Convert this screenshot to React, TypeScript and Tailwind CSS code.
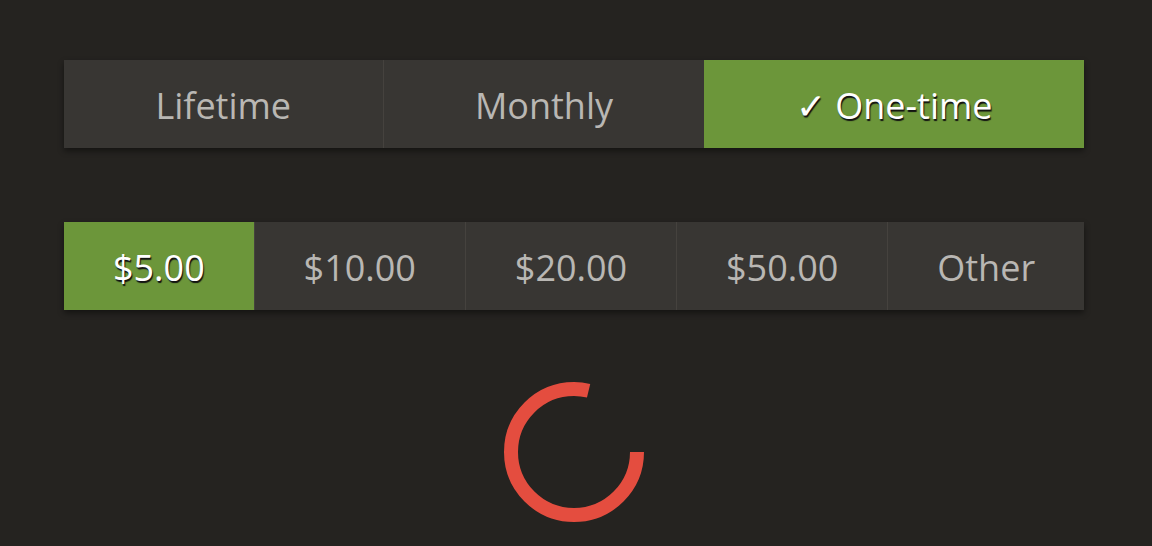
const plans = ["Lifetime", "Monthly", "One-time"];
const amounts = ["$5.00", "$10.00", "$20.00", "$50.00", "Other"];

function Segment({ label, active }: { label: string; active: boolean }) {
  return (
    <button
      className={`flex-auto h-full px-4 pt-[3px] text-[36px] leading-none border-l border-[#45423e] first:border-l-0 ${
        active
          ? "bg-[#6c963a] text-white [text-shadow:1px_2px_1px_#111] border-l-0"
          : "bg-[#383633] text-[#b9b7b3]"
      }`}
    >
      {active && label === "One-time" ? `✓ ${label}` : label}
    </button>
  );
}

export default function App() {
  return (
    <div
      className="w-[1152px] h-[546px] bg-[#252320] overflow-hidden pl-16 pt-[60px]"
      style={{ fontFamily: '"Open Sans", "Noto Sans", sans-serif' }}
    >
      <div className="w-[1020px]">
        <div className="flex h-[88px] shadow-[0_3px_6px_rgba(0,0,0,0.45)]">
          {plans.map((p) => (
            <Segment key={p} label={p} active={p === "One-time"} />
          ))}
        </div>

        <div className="flex h-[88px] mt-[74px] shadow-[0_3px_6px_rgba(0,0,0,0.45)]">
          {amounts.map((a) => (
            <Segment key={a} label={a} active={a === "$5.00"} />
          ))}
        </div>

        <div className="flex justify-center mt-[72px]">
          <svg width="140" height="140" viewBox="0 0 140 140">
            <circle
              cx="70"
              cy="70"
              r="63"
              fill="none"
              stroke="#e44d3f"
              strokeWidth="14"
              strokeDasharray={`${(2 * Math.PI * 63 * 283) / 360} 1000`}
            />
          </svg>
        </div>
      </div>
    </div>
  );
}
